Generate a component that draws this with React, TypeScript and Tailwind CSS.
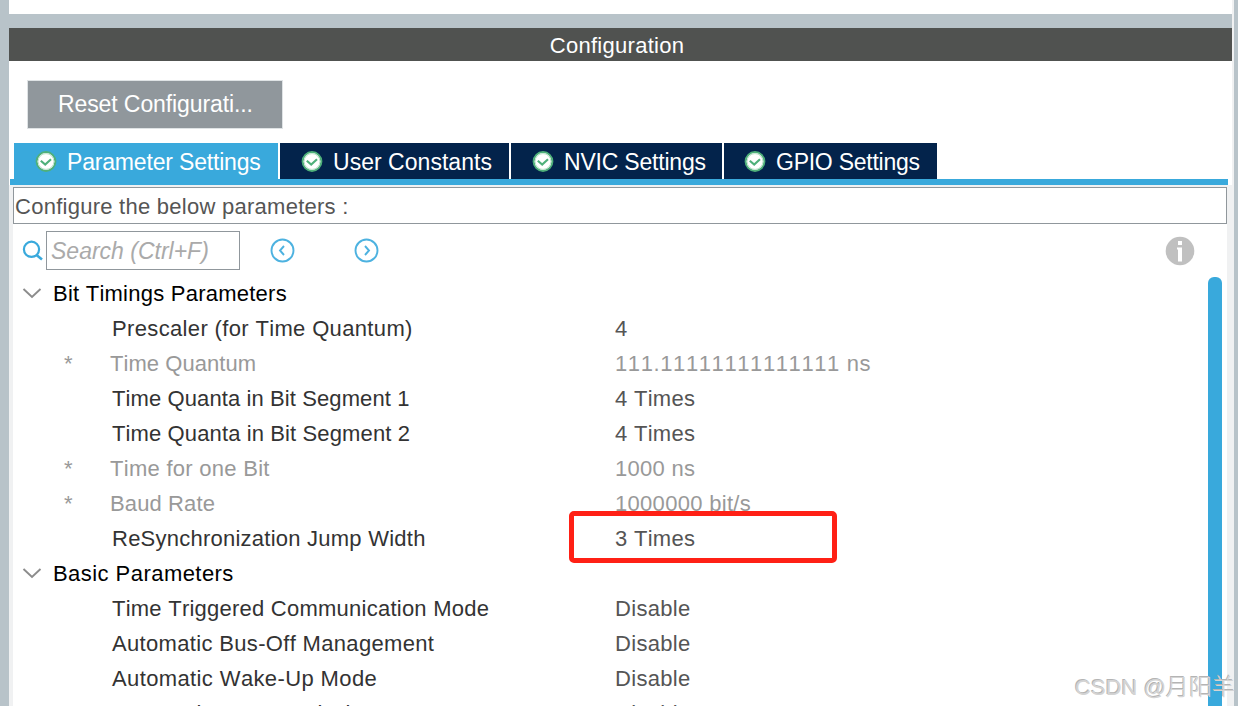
import { ReactNode } from "react";

interface Param {
  name: string;
  value: string;
  readOnly?: boolean;
  highlight?: boolean;
  tracking?: string;
  valueTracking?: string;
}

interface Group {
  title: string;
  tracking: string;
  params: Param[];
}

const tabs = [
  { label: "Parameter Settings", width: "w-[264px]", pad: "pl-[21px]", tracking: "tracking-[-0.18px]", active: true },
  { label: "User Constants", width: "w-[229px]", pad: "pl-[21px]", tracking: "tracking-[0.03px]" },
  { label: "NVIC Settings", width: "w-[211px]", pad: "pl-[21px]", tracking: "tracking-[-0.2px]" },
  { label: "GPIO Settings", width: "w-[213px]", pad: "pl-[20px]", tracking: "tracking-[-0.25px]" },
];

const groups: Group[] = [
  {
    title: "Bit Timings Parameters",
    tracking: "tracking-[0.24px]",
    params: [
      { name: "Prescaler (for Time Quantum)", value: "4", tracking: "tracking-[0.35px]" },
      {
        name: "Time Quantum",
        value: "111.11111111111111 ns",
        readOnly: true,
        tracking: "tracking-[0.06px]",
        valueTracking: "tracking-[0.6px]",
      },
      { name: "Time Quanta in Bit Segment 1", value: "4 Times", tracking: "tracking-[0.1px]" },
      { name: "Time Quanta in Bit Segment 2", value: "4 Times", tracking: "tracking-[0.12px]" },
      { name: "Time for one Bit", value: "1000 ns", readOnly: true, tracking: "tracking-[0.28px]" },
      { name: "Baud Rate", value: "1000000 bit/s", readOnly: true, tracking: "tracking-[0.12px]" },
      { name: "ReSynchronization Jump Width", value: "3 Times", highlight: true, tracking: "tracking-[0.24px]" },
    ],
  },
  {
    title: "Basic Parameters",
    tracking: "tracking-[0.45px]",
    params: [
      { name: "Time Triggered Communication Mode", value: "Disable", tracking: "tracking-[0.24px]" },
      { name: "Automatic Bus-Off Management", value: "Disable", tracking: "tracking-[0.33px]" },
      { name: "Automatic Wake-Up Mode", value: "Disable", tracking: "tracking-[0.38px]" },
      { name: "Automatic Retransmission", value: "Disable", tracking: "tracking-[0.35px]" },
    ],
  },
];

function CheckIcon() {
  return (
    <svg width="22" height="22" viewBox="0 0 22 22" className="shrink-0">
      <circle cx="11" cy="11.5" r="9.4" fill="#fff" stroke="#4fb07a" strokeWidth="2" />
      <circle cx="11" cy="11.5" r="7.9" fill="none" stroke="#bfe3cd" strokeWidth="1" />
      <path d="M5.8 10.7l4.4 3.9 5.8-5.4" fill="none" stroke="#4fb07a" strokeWidth="2.1" />
    </svg>
  );
}

function SearchIcon() {
  return (
    <svg width="22" height="22" viewBox="0 0 22 22" className="shrink-0">
      <circle cx="9.5" cy="9.3" r="7.6" fill="none" stroke="#39a9dc" strokeWidth="2.2" />
      <path d="M14.5 15l5.5 4.5" fill="none" stroke="#39a9dc" strokeWidth="2.6" />
    </svg>
  );
}

function RoundArrow({ d }: { d: string }) {
  return (
    <svg width="26" height="26" viewBox="0 0 26 26" className="shrink-0">
      <circle cx="13.5" cy="12.5" r="11" fill="none" stroke="#4db2e0" strokeWidth="1.9" />
      <path d={d} fill="none" stroke="#4db2e0" strokeWidth="1.9" />
    </svg>
  );
}

function Row({ children }: { children: ReactNode }) {
  return <div className="relative flex h-[35px] shrink-0 items-center whitespace-pre text-[22px]">{children}</div>;
}

function ParamRow({ name, value, readOnly, highlight, tracking, valueTracking }: Param) {
  return (
    <Row>
      <span className="w-[51px] shrink-0" />
      <span className="w-[46px] shrink-0 text-[#999]">{readOnly ? "*" : ""}</span>
      <span className={`w-[505px] shrink-0 ${tracking} ${readOnly ? "text-[#999]" : "pl-[2px] text-[#333]"}`}>
        {name}
      </span>
      <span className={`${valueTracking ?? "tracking-[0.3px]"} ${readOnly ? "text-[#999]" : "text-[#555]"}`}>
        {value}
      </span>
      {highlight && (
        <div className="absolute left-[556px] top-[-10px] h-[52px] w-[268px] rounded-[5px] border-[5px] border-[#ff2015]" />
      )}
    </Row>
  );
}

export default function App() {
  return (
    <div className="relative flex h-[706px] w-[1238px] flex-col overflow-hidden bg-[#b8c3c9] pl-[9px] font-['Liberation_Sans',Arial,sans-serif] [font-kerning:none]">
      <div className="flex h-full w-[1225px] bg-[#f0f1f2]">
        <div className="flex h-full w-[1223px] flex-col">
          <div className="h-[14px] shrink-0 bg-white" />
          <div className="h-[14px] shrink-0 bg-[#b8c3c9]" />
          <div className="flex h-[33px] shrink-0 items-center justify-center bg-[#505250] pr-[7px] pt-px text-[22px] tracking-[0.28px] text-white">
            Configuration
          </div>

          <div className="flex h-[118px] shrink-0 flex-col bg-white pl-[5px] pt-[20px]">
            <button className="ml-[14px] h-[47px] w-[254px] shrink-0 bg-[#90979c] pl-[30px] text-left text-[23px] tracking-[-0.1px] text-white outline outline-[#dfe3e5]">
              Reset Configurati...
            </button>
            <div className="mt-[15px] flex gap-[2px]">
              {tabs.map((tab) => (
                <div
                  key={tab.label}
                  className={`flex h-[36px] shrink-0 items-center gap-[10px] whitespace-nowrap text-[23px] text-white ${tab.width} ${tab.pad} ${tab.tracking} ${
                    tab.active ? "bg-[#39a9dc]" : "bg-[#03234b]"
                  }`}
                >
                  <CheckIcon />
                  <span className="pt-[2px]">{tab.label}</span>
                </div>
              ))}
            </div>
          </div>
          <div className="flex h-[6px] shrink-0 bg-white pl-px">
            <div className="w-[1218px] bg-[#39a9dc]" />
          </div>

          <div className="flex min-h-0 grow bg-[#f0f1f2] pl-[4px]">
            <div className="flex w-[1214px] flex-col overflow-hidden bg-white">
              <div className="h-[2px] shrink-0 bg-[#f0f1f2]" />
              <div className="flex h-[37px] shrink-0 items-center border border-[#90979c] pl-[1px] pt-[2px] text-[22px] tracking-[0.26px] text-[#555]">
                Configure the below parameters :
              </div>

              <div className="mt-[7px] flex h-[39px] shrink-0 items-center">
                <div className="w-[33px] shrink-0 pl-[9px]">
                  <SearchIcon />
                </div>
                <input
                  placeholder="Search (Ctrl+F)"
                  className="h-[39px] w-[194px] border border-[#90979c] pl-[4px] pt-[2px] text-[23px] italic placeholder:text-[#aaa]"
                />
                <div className="ml-[29px]">
                  <RoundArrow d="M15 8l-4 4.5 4 4.5" />
                </div>
                <div className="ml-[58px]">
                  <RoundArrow d="M12 8l4 4.5-4 4.5" />
                </div>
                <svg width="30" height="30" viewBox="0 0 30 30" className="ml-auto mr-[32px]">
                  <circle cx="15" cy="15" r="14.3" fill="#c0c0c0" />
                  <rect x="13" y="5" width="4" height="4" fill="#fff" />
                  <path d="M12 11.5h5v14h-4v-12h-1z" fill="#fff" />
                </svg>
              </div>

              <div className="flex min-h-0 grow pt-[6px]">
                <div className="flex w-[1195px] shrink-0 flex-col overflow-hidden">
                  {groups.map((group) => (
                    <div key={group.title} className="shrink-0">
                      <Row>
                        <svg width="20" height="14" viewBox="0 0 20 14" className="ml-[9px] mr-[11px] shrink-0">
                          <path d="M1.5 2l8.5 8 8.5-8" fill="none" stroke="#8c8c8c" strokeWidth="1.9" />
                        </svg>
                        <span className={`text-black ${group.tracking}`}>{group.title}</span>
                      </Row>
                      {group.params.map((param) => (
                        <ParamRow key={param.name} {...param} />
                      ))}
                    </div>
                  ))}
                </div>
                <div className="mt-px w-[14px] shrink-0 rounded-t-[6px] bg-[#39a9dc]" />
              </div>
            </div>
          </div>
        </div>
      </div>

      {/* watermark */}
      <div className="absolute left-[1075px] top-[672px] whitespace-nowrap font-['Liberation_Sans','Noto_Sans_CJK_SC',sans-serif] text-[22px] leading-[30px] tracking-[0.05px] text-[#d4d4d4] [text-shadow:-1px_-1px_0_#b4b4b4]">
        CSDN @<span className="text-[23px] font-light">月阳羊</span>
      </div>
    </div>
  );
}
